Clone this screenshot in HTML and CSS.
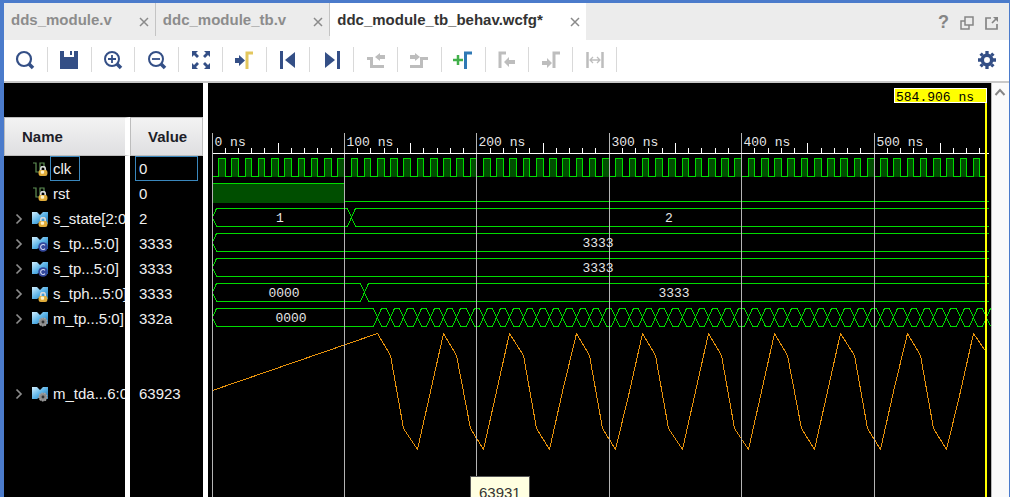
FILE: index.html
```html
<!DOCTYPE html>
<html lang="en">
  <head>
    <meta charset="UTF-8" />
    <meta name="viewport" content="width=device-width, initial-scale=1.0" />
    <link rel="stylesheet" href="styles.css">
    <title>ddc_module_tb_behav.wcfg</title>
  </head>
  <body>
    <svg class="defs" width="0" height="0" aria-hidden="true">
      <defs>
        <linearGradient id="blue" x1="0" y1="0" x2="1" y2="1">
          <stop offset="0" stop-color="#d4f0ff" />
          <stop offset="0.5" stop-color="#5cb4e8" />
          <stop offset="1" stop-color="#1b6fae" />
        </linearGradient>
        <symbol id="chevron" viewBox="0 0 8 12">
          <path d="M1.5 1.5L6 6l-4.500 4.500" fill="none" stroke="#8c8c8c" stroke-width="1.7" />
        </symbol>
        <symbol id="lock" viewBox="0 0 9 9">
          <path d="M2.500 4V2.500a2 2 0 0 1 4 0V4" fill="none" stroke="#d8d8d8" stroke-width="1.5" />
          <rect x="0.5" y="3.5" width="8" height="5.500" rx="2" fill="#e0ac3a" />
          <rect x="2.5" y="4" width="3" height="3" rx="1" fill="#fff2c8" />
        </symbol>
        <symbol id="scalar" viewBox="0 0 16 16">
          <path d="M1 2h3v9h4V2h4v5" fill="none" stroke="#5f8f54" stroke-width="1.2" />
          <use href="#lock" x="6" y="5" width="10" height="10" />
        </symbol>
        <symbol id="bus" viewBox="0 0 16 16">
          <path d="M0 1h5l3 3 3-3h5v12h-5l-3-2-3 2H0z" fill="url(#blue)" />
        </symbol>
        <symbol id="constant" viewBox="0 0 9 9">
          <circle cx="4.5" cy="4.5" r="4.3" fill="#34489c" />
          <path d="M6.300 3.100a2.200 2.200 0 1 0 0 2.800" fill="none" stroke="#d5dcf5" />
        </symbol>
        <symbol id="gear-badge" viewBox="0 0 9 9">
          <circle cx="4.5" cy="4.5" r="3.6" fill="#8e8e8e" stroke="#a5a5a5" stroke-dasharray="1.5 1" />
          <circle cx="4.5" cy="4.5" r="1.3" fill="#333" />
        </symbol>
        <symbol id="close" viewBox="0 0 10 10">
          <path d="M1 1l8 8M9 1l-8 8" fill="none" stroke="#8a8a8a" stroke-width="1.5" />
        </symbol>
      </defs>
    </svg>

    <div class="window">
      <header class="tabs">
        <div class="tab">
          <button class="tab-name">dds_module.v</button>
          <button class="close" aria-label="Close"><svg width="10" height="10"><use href="#close" /></svg></button>
        </div>
        <div class="tab">
          <button class="tab-name">ddc_module_tb.v</button>
          <button class="close" aria-label="Close"><svg width="10" height="10"><use href="#close" /></svg></button>
        </div>
        <div class="tab active">
          <button class="tab-name">ddc_module_tb_behav.wcfg*</button>
          <button class="close" aria-label="Close"><svg width="10" height="10"><use href="#close" /></svg></button>
        </div>
        <div class="window-actions">
          <button class="help">?</button>
          <button aria-label="Restore">
            <svg width="14" height="14" fill="none" stroke="#858585" stroke-width="1.5"><path d="M5 1h8v8H5zM5 5H1v8h8V9" /></svg>
          </button>
          <button aria-label="Float">
            <svg width="14" height="14" fill="none" stroke="#858585" stroke-width="1.7"><path d="M6 2H1v11h11V8M7 7l4-4" /><path d="M8 1h5v5z" fill="#858585" stroke="none" /></svg>
          </button>
        </div>
      </header>

      <div class="toolbar">
        <div class="tools">
          <button aria-label="Search">
            <svg viewBox="0 0 20 20" fill="none" stroke="#344f86"><circle cx="9" cy="9" r="7" stroke-width="2.2" /><path d="M14 14l4 4" stroke-width="3.5" /></svg>
          </button>
          <button aria-label="Save">
            <svg viewBox="0 0 20 20" fill="#344f86"><path d="M1 1h4v6h10V1h4v18H1z" /><path d="M11 1h2v4h-2z" /></svg>
          </button>
          <button aria-label="Zoom in">
            <svg viewBox="0 0 20 20" fill="none" stroke="#344f86"><circle cx="9" cy="9" r="7" stroke-width="2" /><path d="M14 14l4 4" stroke-width="3.5" /><path d="M5 9h8M9 5v8" stroke-width="1.8" /></svg>
          </button>
          <button aria-label="Zoom out">
            <svg viewBox="0 0 20 20" fill="none" stroke="#344f86"><circle cx="9" cy="9" r="7" stroke-width="2" /><path d="M14 14l4 4" stroke-width="3.5" /><path d="M5 9h8" stroke-width="1.8" /></svg>
          </button>
          <button aria-label="Zoom fit">
            <svg viewBox="0 0 20 20" fill="#344f86"><path d="M1 1h6L5 3l3 3-2 2-3-3-2 2zM19 1h-6l2 2-3 3 2 2 3-3 2 2zM1 19h6l-2-2 3-3-2-2-3 3-2-2zM19 19h-6l2-2-3-3 2-2 3 3 2-2z" /></svg>
          </button>
          <button aria-label="Go to cursor">
            <svg viewBox="0 0 20 20"><path d="M1 8h4V5l6 5.500L5 16v-3H1z" fill="#344f86" /><path d="M13 19V3h6" fill="none" stroke="#e3c75e" stroke-width="3" /></svg>
          </button>
          <button aria-label="Go to time 0">
            <svg viewBox="0 0 20 20" fill="#344f86"><path d="M2 1h3v18H2zM17 2v16L7 10z" /></svg>
          </button>
          <button aria-label="Go to last time">
            <svg viewBox="0 0 20 20" fill="#344f86"><path d="M15 1h3v18h-3zM3 2v16l10-8z" /></svg>
          </button>
          <button aria-label="Previous transition" disabled>
            <svg viewBox="0 0 20 20" fill="#bdbdbd"><path d="M1 7h6v8h11v3H4v-8H1zM9 7l5-4v2h5v4h-5v2z" /></svg>
          </button>
          <button aria-label="Next transition" disabled>
            <svg viewBox="0 0 20 20" fill="#bdbdbd"><path d="M1 15h10V7h8v3h-5v8H1zM1 5h5V3l5 4-5 4V9H1z" /></svg>
          </button>
          <button aria-label="Add marker">
            <svg viewBox="0 0 20 20" fill="none"><path d="M0 10h10M5 5v10" stroke="#41b04a" stroke-width="2.5" /><path d="M12.500 19V3H19" stroke="#2f79b5" stroke-width="3" /></svg>
          </button>
          <button aria-label="Previous marker" disabled>
            <svg viewBox="0 0 20 20" fill="none"><path d="M3 18V3h6" stroke="#bdbdbd" stroke-width="3" /><path d="M7 12l5-5v3h6v4h-6v3z" fill="#bdbdbd" /></svg>
          </button>
          <button aria-label="Next marker" disabled>
            <svg viewBox="0 0 20 20" fill="none"><path d="M13 18V3h6" stroke="#bdbdbd" stroke-width="3" /><path d="M11 13L6 8v3H1v4h5v3z" fill="#bdbdbd" /></svg>
          </button>
          <button aria-label="Swap cursors" disabled>
            <svg viewBox="0 0 20 20" fill="none" stroke="#bdbdbd"><path d="M2.500 2v16M17.500 2v16" stroke-width="2.5" /><path d="M5 10h10M8 7l-3 3 3 3M12 7l3 3-3 3" stroke-width="1.3" /></svg>
          </button>
        </div>
        <button class="settings" aria-label="Settings">
          <svg viewBox="0 0 20 20" fill="none" stroke="#344f86"><circle cx="10" cy="10" r="4.7" stroke-width="3.5" /><path d="M10 1v3M10 16v3M1 10h3M16 10h3M3.600 3.600l2.100 2.100M14.300 14.300l2.100 2.100M3.600 16.400l2.100-2.100M14.300 5.700l2.100-2.100" stroke-width="3.3" /></svg>
        </button>
      </div>

      <main class="viewer">
        <section class="signals">
          <table>
            <thead>
              <tr><th>Name</th><th>Value</th></tr>
            </thead>
            <tbody>
              <tr class="selected">
                <td><div class="signal"><span class="arrow"></span><svg class="kind"><use href="#scalar" /></svg><span class="text">clk</span></div></td>
                <td><div class="value">0</div></td>
              </tr>
              <tr>
                <td><div class="signal"><span class="arrow"></span><svg class="kind"><use href="#scalar" /></svg><span class="text">rst</span></div></td>
                <td><div class="value">0</div></td>
              </tr>
              <tr>
                <td><div class="signal"><svg class="arrow"><use href="#chevron" /></svg><svg class="kind"><use href="#bus" /><use href="#lock" x="6" y="6" width="10" height="10" /></svg><span class="text">s_state[2:0]</span></div></td>
                <td><div class="value">2</div></td>
              </tr>
              <tr>
                <td><div class="signal"><svg class="arrow"><use href="#chevron" /></svg><svg class="kind"><use href="#bus" /><use href="#constant" x="6" y="6" width="10" height="10" /></svg><span class="text">s_tp...5:0]</span></div></td>
                <td><div class="value">3333</div></td>
              </tr>
              <tr>
                <td><div class="signal"><svg class="arrow"><use href="#chevron" /></svg><svg class="kind"><use href="#bus" /><use href="#constant" x="6" y="6" width="10" height="10" /></svg><span class="text">s_tp...5:0]</span></div></td>
                <td><div class="value">3333</div></td>
              </tr>
              <tr>
                <td><div class="signal"><svg class="arrow"><use href="#chevron" /></svg><svg class="kind"><use href="#bus" /><use href="#lock" x="6" y="6" width="10" height="10" /></svg><span class="text">s_tph...5:0]</span></div></td>
                <td><div class="value">3333</div></td>
              </tr>
              <tr>
                <td><div class="signal"><svg class="arrow"><use href="#chevron" /></svg><svg class="kind"><use href="#bus" /><use href="#gear-badge" x="6" y="6" width="10" height="10" /></svg><span class="text">m_tp...5:0]</span></div></td>
                <td><div class="value">332a</div></td>
              </tr>
              <tr class="analog">
                <td><div class="signal"><svg class="arrow"><use href="#chevron" /></svg><svg class="kind"><use href="#bus" /><use href="#gear-badge" x="6" y="6" width="10" height="10" /></svg><span class="text">m_tda...6:0]</span></div></td>
                <td><div class="value">63923</div></td>
              </tr>
              <tr class="filler"><td></td><td></td></tr>
            </tbody>
          </table>
        </section>

        <section class="waves">
          <svg class="plot"></svg>
          <div class="tooltip">63931</div>
        </section>

        <div class="scroll">
          <button aria-label="Scroll up">
            <svg width="12" height="8" fill="none" stroke="#858585" stroke-width="2"><path d="M1.500 7L6 2l4.500 5" /></svg>
          </button>
        </div>
      </main>
    </div>

    <script src="script.js"></script>
  </body>
</html>
```
FILE: styles.css
```css
* {
  box-sizing: border-box;
  margin: 0;
  padding: 0;
}
body {
  font-family: "Liberation Sans", Arial, sans-serif;
  font-size: 15px;
  line-height: 25px;
  overflow: hidden;
}
button {
  display: flex;
  align-items: center;
  justify-content: center;
  border: 0;
  background: none;
  font: inherit;
  color: inherit;
}
.defs {
  position: absolute;
}
.window {
  display: flex;
  flex-direction: column;
  height: 100vh;
  border: solid #4b7bcb;
  border-width: 3px 1px 0 4px;
  background-color: #fff;
}

/* tabs */
.tabs {
  display: flex;
  height: 37px;
  flex: none;
  background-color: #ececec;
}
.tab {
  display: flex;
  align-items: center;
  justify-content: space-between;
  gap: 27px;
  height: 33px;
  padding: 0 6px 0 7px;
  border-right: 1px solid #c4c4c4;
  color: #8c8c8c;
  font-weight: bold;
}
.tab.active {
  height: 37px;
  padding-bottom: 4px;
  border: 0;
  background-color: #fff;
  color: #333;
}
.close {
  padding-top: 4px;
}
.window-actions {
  display: flex;
  align-items: center;
  gap: 11px;
  margin-left: auto;
  padding: 2px 10px 0 0;
}
.help {
  color: #858585;
  font-size: 18px;
  font-weight: bold;
}

/* toolbar */
.toolbar {
  display: flex;
  align-items: center;
  justify-content: space-between;
  flex: none;
  height: 43px;
  padding-bottom: 2px;
  border-bottom: 2px solid #c8c8c8;
}
.tools {
  display: grid;
  grid-template-columns: repeat(14, 1fr);
  flex: 0 1 613px;
}
.tools button {
  height: 25px;
  border-right: 1px solid #d9d9d9;
}
.toolbar svg {
  width: 20px;
  height: 20px;
}
.settings {
  margin-right: 12px;
}

/* signal list */
.viewer {
  display: flex;
  flex: 1;
  min-height: 0;
  overflow: hidden;
}
.signals {
  flex: none;
  width: 204px;
  padding-top: 34px;
  border-right: 5px solid #fff;
  background-color: #000;
}
table {
  width: 100%;
  table-layout: fixed;
  border-collapse: separate;
  border-spacing: 0;
  color: #f0f0f0;
}
th {
  height: 39px;
  border: 1px solid #bdbdbd;
  background: linear-gradient(#f3f3f3, #dfdfe1);
  background-clip: padding-box;
  color: #1e1e28;
  text-align: left;
  padding-left: 17px;
}
th:first-child,
td:first-child {
  width: 126px;
  border-right: 5px solid #fff;
}
td {
  height: 25px;
  overflow: hidden;
}
.signal {
  display: flex;
  align-items: center;
  padding-left: 11px;
  white-space: nowrap;
}
.arrow {
  flex: none;
  width: 8px;
  height: 12px;
  margin-right: 9px;
}
.kind {
  flex: none;
  width: 16px;
  height: 16px;
  margin-right: 2px;
}
.text {
  height: 25px;
  padding: 0 8px 0 2px;
  border: 1px solid transparent;
  line-height: 23px;
}
.value {
  height: 25px;
  margin: 0 5px;
  padding-left: 3px;
  border: 1px solid transparent;
  line-height: 23px;
}
.selected .text,
.selected .value {
  border-color: #3a87bd;
}
.analog td {
  height: 125px;
}
.filler td {
  height: 100vh;
}

/* waveforms */
.waves {
  position: relative;
  flex: 1;
  min-width: 0;
  overflow: hidden;
  background-color: #000;
}
.plot {
  display: block;
  width: 100%;
  height: 100%;
  font: 13px "Liberation Mono", monospace;
  fill: none;
  shape-rendering: crispEdges;
}
.plot text {
  fill: #e6e6e6;
}
.plot .center {
  text-anchor: middle;
}
.grid {
  stroke: #b4b4b4;
}
.ruler {
  stroke: #fff;
}
.high {
  fill: #004e00;
}
.digital {
  stroke: #00dc00;
}
.analog-line {
  stroke: #e8930c;
}
.cursor {
  stroke: #ff0;
  stroke-width: 2;
}
.cursor-label {
  fill: #ff0;
  stroke: #fff;
}
.plot .cursor-time {
  fill: #000;
}
.tooltip {
  position: absolute;
  top: 393px;
  left: 262px;
  padding: 3px 8px;
  border: 1px solid #555;
  background-color: #ffffe1;
  color: #333;
}

.scroll {
  flex: none;
  width: 18px;
  padding: 5px 2px;
  border-left: 1px solid #b8b8b8;
  background-color: #fafafa;
}
```
FILE: script.js
```js
const plot = document.querySelector(".plot");

const ORIGIN = 4;
const SCALE = 1.324; // pixels per ns
const END = 584.906;
const RULER_Y = 70.5;

const px = (ns) => Math.floor(ORIGIN + ns * SCALE) + 0.5;

const add = (tag, attrs, text) => {
  const el = document.createElementNS("http://www.w3.org/2000/svg", tag);
  for (const key in attrs) {
    el.setAttribute(key, attrs[key]);
  }
  if (text) {
    el.textContent = text;
  }
  plot.appendChild(el);
};

const drawClock = (high, low) => {
  let d = `M${px(0)} ${low}`;
  for (let t = 5; t < END; t += 10) {
    const rise = px(t);
    const fall = px(Math.min(t + 5, END));
    add("rect", { class: "high", x: rise, y: high, width: fall - rise, height: low - high });
    d += `H${rise}V${high}H${fall}`;
    if (t + 5 < END) {
      d += `V${low}`;
    }
  }
  add("path", { class: "digital", d: `${d}H${px(END)}` });
};

const drawReset = (high, low) => {
  const x = px(100);
  add("rect", { class: "high", x: px(0), y: high, width: x - px(0), height: low - high + 1 });
  add("path", { class: "digital", d: `M${px(0)} ${high}H${x}M${x} ${low}H${px(END) + 2}` });
};

// changes: times in ns at which the bus takes a new value
const drawBus = (top, changes) => {
  const bottom = top + 18;
  const mid = top + 9;
  let up = `M${px(0)} ${mid}L${px(0) + 4} ${top}`;
  let down = `M${px(0)} ${mid}L${px(0) + 4} ${bottom}`;
  changes.forEach((t) => {
    const x = px(t);
    up += `H${x - 4}L${x} ${mid}L${x + 4} ${top}`;
    down += `H${x - 4}L${x} ${mid}L${x + 4} ${bottom}`;
  });
  if (changes.length < 2) {
    up += `H${px(END) + 2}`;
    down += `H${px(END) + 2}`;
  }
  add("path", { class: "digital", d: up + down });
};

const drawAnalog = () => {
  const levels = [250.5, 272.5, 345.5, 366.5, 308.5];
  let d = `M${px(0)} 307.5`;
  let i = 0;
  for (let t = 125; t < END; t += 10) {
    d += `L${px(t)} ${levels[i++ % levels.length]}`;
  }
  add("path", { class: "analog-line", d: `${d}L${px(END)} 269.5` });
};

const label = (x, y, text) => add("text", { class: "center", x, y }, text);

drawClock(75.5, 93.5);
drawReset(100.5, 118.5);
drawBus(125.5, [105]);
drawBus(150.5, []);
drawBus(175.5, []);
drawBus(200.5, [115]);

const samples = [];
for (let t = 125; t < END + 5; t += 10) {
  samples.push(t);
}
drawBus(225.5, samples);
drawAnalog();

// ruler
for (let t = 0; t < END; t += 10) {
  const x = px(t);
  if (t % 100 === 0) {
    add("path", { class: "grid", d: `M${x} 50V2000` });
    add("text", { x: x + 2, y: 63 }, `${t} ns`);
  } else {
    add("path", { class: "ruler", d: `M${x} ${t % 50 === 0 ? 60 : 65}V${RULER_Y}` });
  }
}
add("path", { class: "ruler", d: `M${px(0)} ${RULER_Y}H${px(END) + 2}` });

label(72, 139, "1");
label(461, 139, "2");
label(390, 164, "3333");
label(390, 189, "3333");
label(76, 214, "0000");
label(466, 214, "3333");
label(83, 239, "0000");

// main cursor
add("path", { class: "cursor", d: `M${px(END) - 0.5} 6V2000` });
add("rect", { class: "cursor-label", x: 686.5, y: 5.5, width: 92, height: 14 });
add("text", { class: "cursor-time", x: 688, y: 18 }, "584.906 ns");
```
